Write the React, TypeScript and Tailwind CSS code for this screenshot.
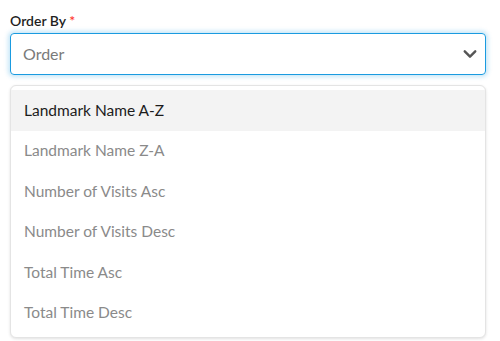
const options = [
  "Landmark Name A-Z",
  "Landmark Name Z-A",
  "Number of Visits Asc",
  "Number of Visits Desc",
  "Total Time Asc",
  "Total Time Desc",
];

export default function App() {
  return (
    <div className="w-[500px] h-[341px] bg-white px-[10px] pt-[12px] font-['Lato','Noto_Sans',sans-serif]">
      <label className="block text-[14px] font-semibold text-[#1f1f1f] leading-[18px] mb-[3px]">
        Order By <span className="text-[#ff3b30]">*</span>
      </label>
      <div className="flex items-center justify-between h-[42px] w-[476px] rounded-[4px] border border-[#1a9be0] pl-[12px] pr-[6px] shadow-[0_0_4px_2px_rgba(26,155,224,0.25)]">
        <span className="text-[16px] text-[#7a7a7a]">Order</span>
        <svg width="18" height="18" viewBox="0 0 24 24" fill="none" stroke="#555" strokeWidth="3.2" strokeLinecap="round" strokeLinejoin="round">
          <path d="M5 8.5l7 7 7-7" />
        </svg>
      </div>
      <ul className="mt-[10px] w-[476px] rounded-[6px] border border-[#e4e4e4] bg-white py-[4px] shadow-[0_1px_3px_rgba(0,0,0,0.12)]">
        {options.map((o, i) => (
          <li
            key={o}
            className={`h-[40.5px] flex items-center px-[13px] text-[15.5px] ${
              i === 0 ? "bg-[#f3f3f3] text-[#1c1c1c]" : "text-[#8a8a8a]"
            }`}
          >
            {o}
          </li>
        ))}
      </ul>
    </div>
  );
}
